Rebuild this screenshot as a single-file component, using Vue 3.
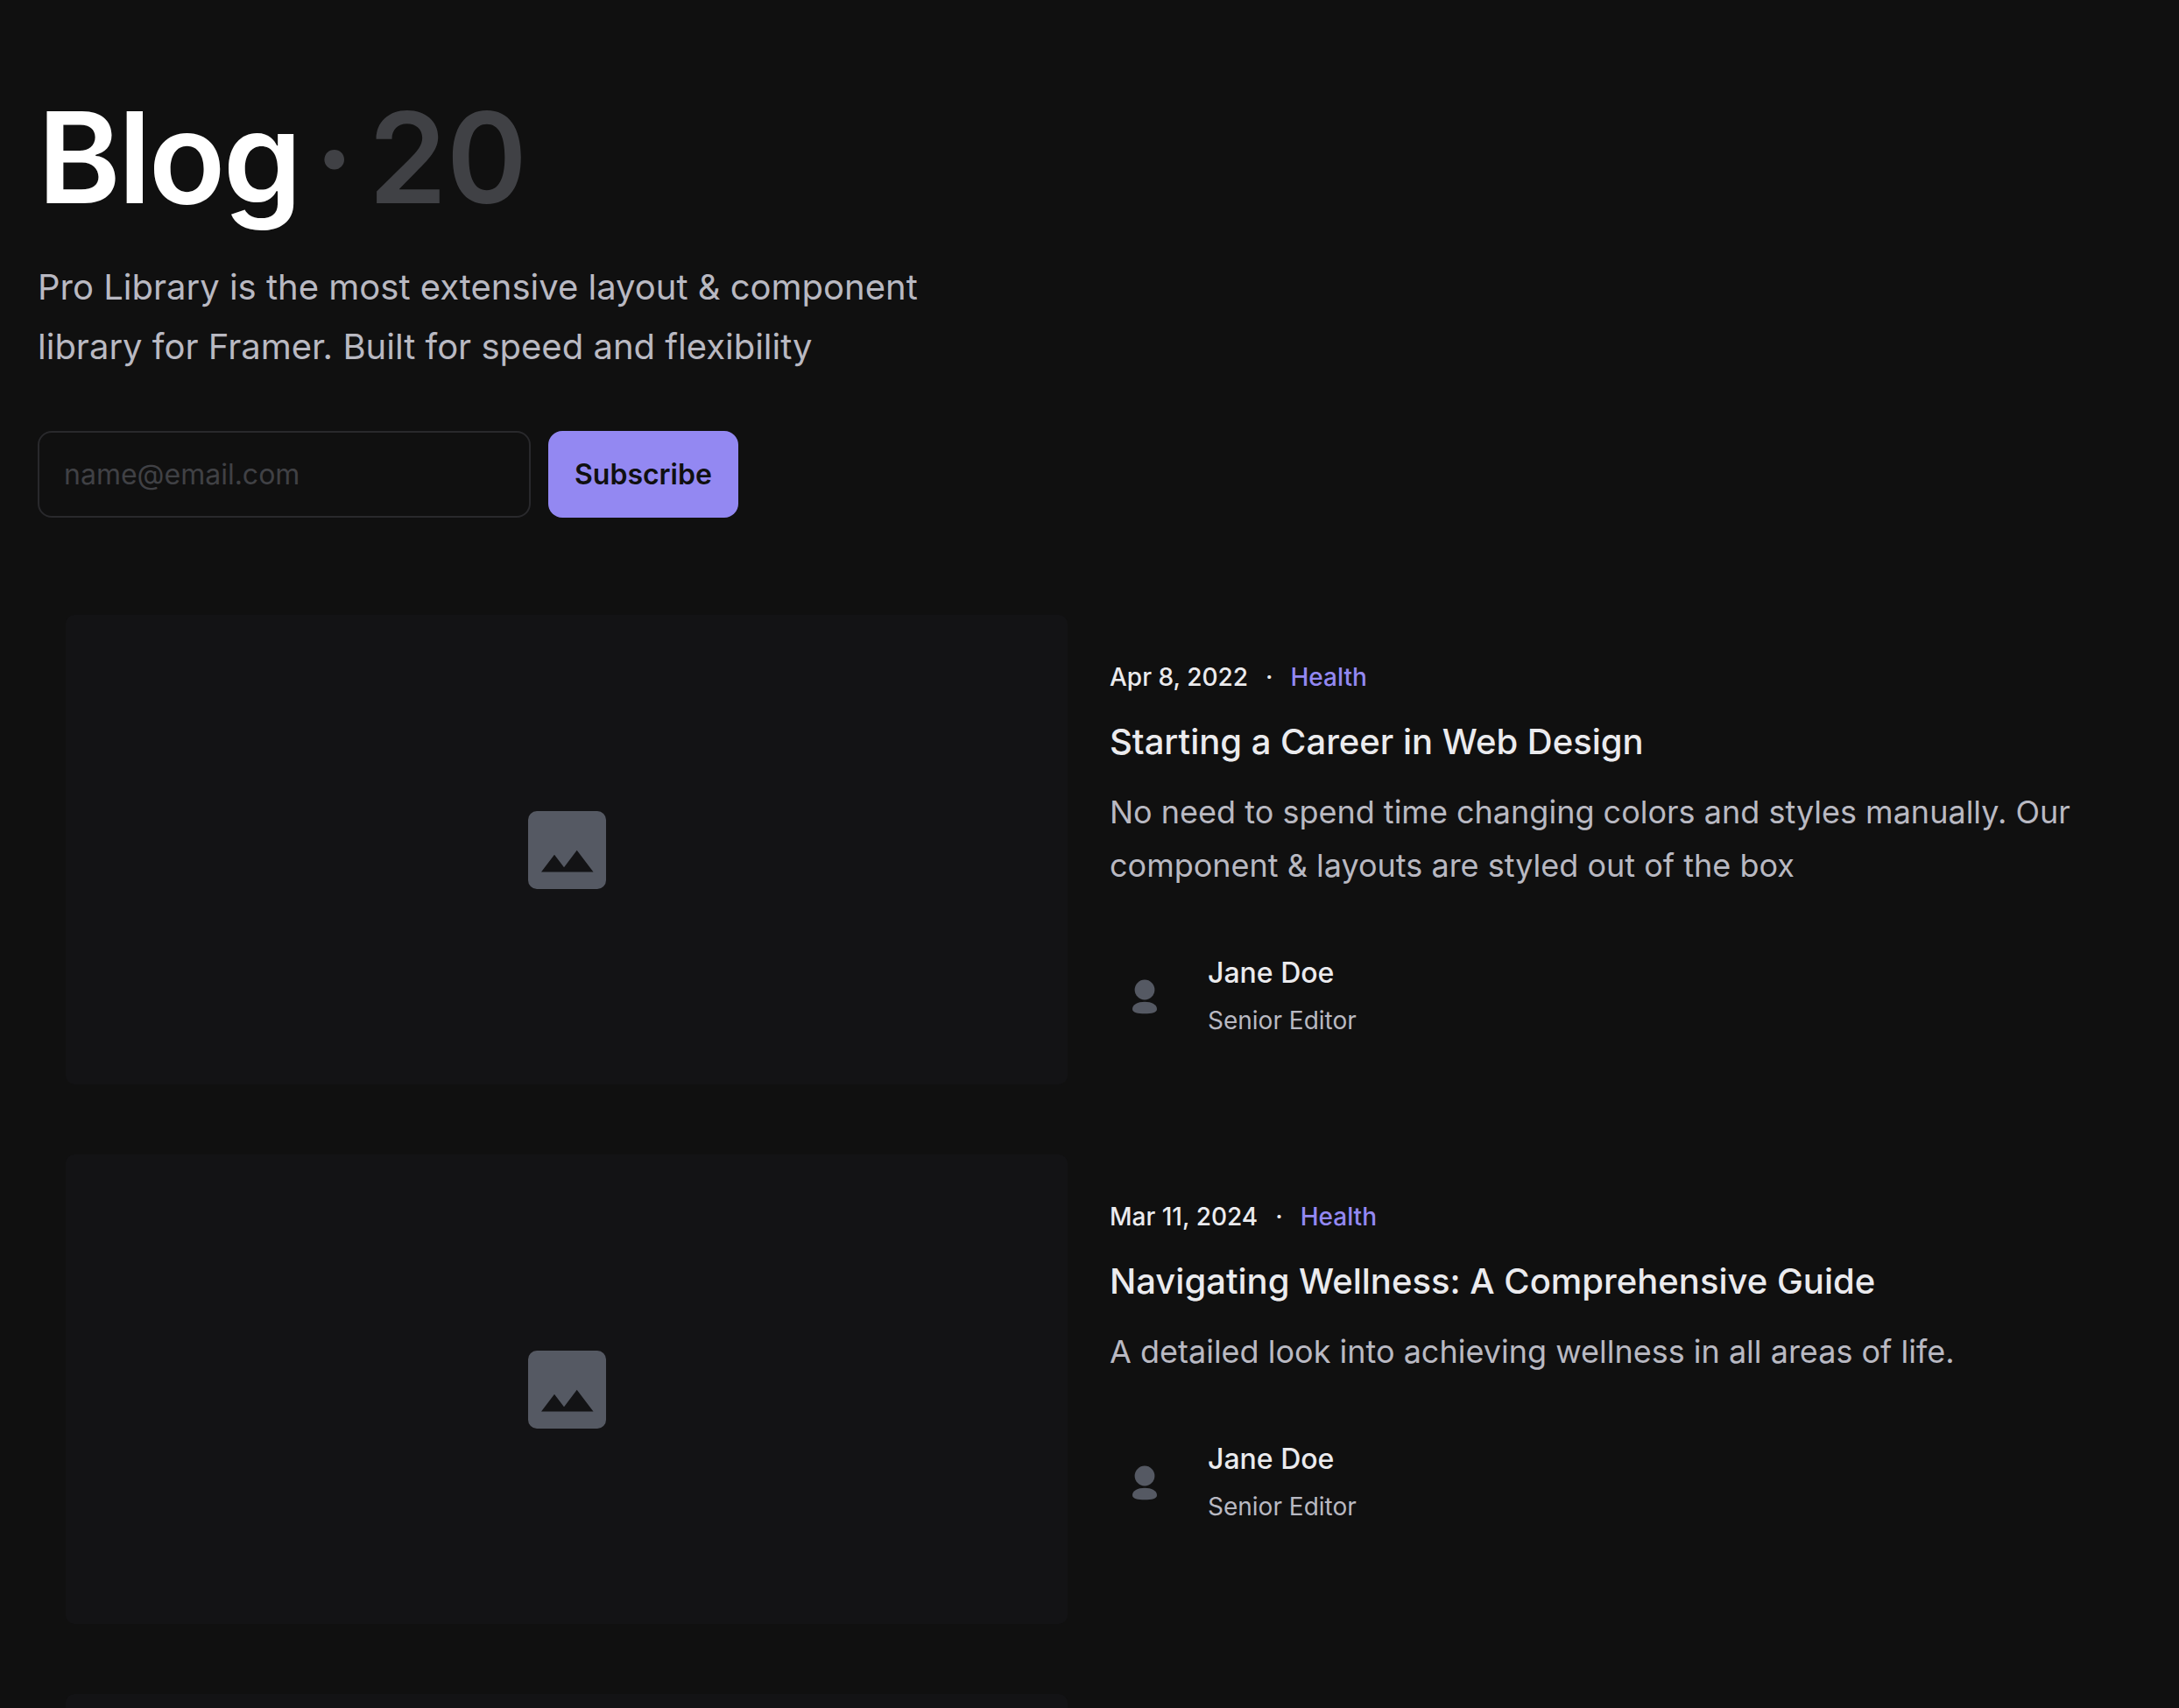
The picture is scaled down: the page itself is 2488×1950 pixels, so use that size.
<script setup>
import { ref } from 'vue';

const email = ref('');

const posts = ref([
  {
    id: 1,
    date: 'Apr 8, 2022',
    category: 'Health',
    title: 'Starting a Career in Web Design',
    excerpt: 'No need to spend time changing colors and styles manually. Our component & layouts are styled out of the box',
    author: 'Jane Doe',
    role: 'Senior Editor',
  },
  {
    id: 2,
    date: 'Mar 11, 2024',
    category: 'Health',
    title: 'Navigating Wellness: A Comprehensive Guide',
    excerpt: 'A detailed look into achieving wellness in all areas of life.',
    author: 'Jane Doe',
    role: 'Senior Editor',
  },
]);

const handleSubscribe = () => {
  email.value = '';
};
</script>

<template>
  <main class="blog">
    <header class="intro">
      <h1>
        <span>Blog</span>
        <span class="count">·</span>
        <span class="count">20</span>
      </h1>
      <p class="lead">
        Pro Library is the most extensive layout &amp; component library for Framer. Built for speed and flexibility
      </p>
      <form class="subscribe" @submit.prevent="handleSubscribe">
        <input v-model="email" type="email" class="email" placeholder="name@email.com" aria-label="Email address" />
        <button type="submit" class="subscribe-button">Subscribe</button>
      </form>
    </header>

    <section class="posts">
      <article v-for="post in posts" :key="post.id" class="post">
        <div class="cover">
          <svg class="cover-icon" viewBox="0 0 89 89" aria-hidden="true">
            <path
              fill-rule="evenodd"
              d="M10 0H79A10 10 0 0 1 89 10V79A10 10 0 0 1 79 89H10A10 10 0 0 1 0 79V10A10 10 0 0 1 10 0ZM15 69.5H74.5L55.7 44.7L41 64.2L30 49.7Z"
            />
          </svg>
        </div>
        <div class="content">
          <div class="meta">
            <time>{{ post.date }}</time>
            <span>·</span>
            <a href="#" class="category">{{ post.category }}</a>
          </div>
          <h2>{{ post.title }}</h2>
          <p class="excerpt">{{ post.excerpt }}</p>
          <div class="author">
            <svg class="avatar" viewBox="0 0 80 80" aria-hidden="true">
              <circle cx="40" cy="33" r="11.4" />
              <path d="M26 55C26 50 32 46.8 40 46.8S54 50 54 55C54 59 48 60.3 40 60.3S26 59 26 55Z" />
            </svg>
            <div class="author-text">
              <p class="name">{{ post.author }}</p>
              <p class="role">{{ post.role }}</p>
            </div>
          </div>
        </div>
      </article>

      <!-- next post, still loading -->
      <article class="post">
        <div class="cover"></div>
      </article>
    </section>
  </main>
</template>

<style>
body {
  margin: 0;
  background: #101010;
}
</style>

<style scoped>
.blog {
  height: 100vh;
  overflow: hidden;
  box-sizing: border-box;
  padding: 96px 43px 0;
  font-family: Inter, "Liberation Sans", sans-serif;
  color: #ebebee;
  background: #101010;
}

h1,
h2,
p {
  margin: 0;
}

h1 {
  display: flex;
  gap: 17px;
  font-size: 144px;
  line-height: 168px;
  font-weight: 600;
  letter-spacing: -0.02em;
  color: #fff;
}

.count {
  color: #404145;
  font-variant-numeric: tabular-nums;
}

.lead {
  max-width: 1060px;
  margin-top: 30px;
  font-size: 40px;
  line-height: 68px;
  color: #b9b9c2;
}

.subscribe {
  display: flex;
  gap: 20px;
  margin-top: 62px;
}

.email,
.subscribe-button {
  box-sizing: border-box;
  height: 99px;
  border-radius: 16px;
  font-family: inherit;
  font-size: 32px;
}

.email {
  width: 563px;
  padding: 0 28px;
  border: 2px solid #29292c;
  background: transparent;
  color: #ebebee;
}

.email::placeholder {
  color: #404145;
  opacity: 1;
}

.subscribe-button {
  padding: 0 30px;
  border: none;
  background: #9388f2;
  color: #101010;
  font-weight: 600;
  cursor: pointer;
}

.posts {
  display: grid;
  gap: 80px;
  margin: 111px 34px 0 32px;
}

.post {
  display: grid;
  grid-template-columns: 1fr 1fr;
  gap: 48px;
}

.cover {
  display: flex;
  align-items: center;
  justify-content: center;
  height: 536px;
  border-radius: 10px;
  background: #131315;
}

.cover-icon {
  width: 89px;
  height: 89px;
  fill: #555963;
}

.content {
  padding-top: 47px;
}

.meta {
  display: flex;
  gap: 20px;
  font-size: 28px;
  line-height: 48px;
  font-weight: 500;
}

.category {
  color: #9388f2;
  text-decoration: none;
}

h2 {
  margin-top: 22px;
  font-size: 40px;
  line-height: 56px;
  font-weight: 500;
}

.excerpt {
  margin-top: 22px;
  font-size: 36px;
  line-height: 61px;
  color: #b9b9c2;
}

.author {
  display: flex;
  align-items: center;
  gap: 32px;
  margin-top: 64px;
}

.avatar {
  width: 80px;
  height: 80px;
  fill: #555963;
}

.name {
  font-size: 32px;
  line-height: 56px;
  font-weight: 500;
}

.role {
  font-size: 28px;
  line-height: 52px;
  color: #b9b9c2;
}
</style>
